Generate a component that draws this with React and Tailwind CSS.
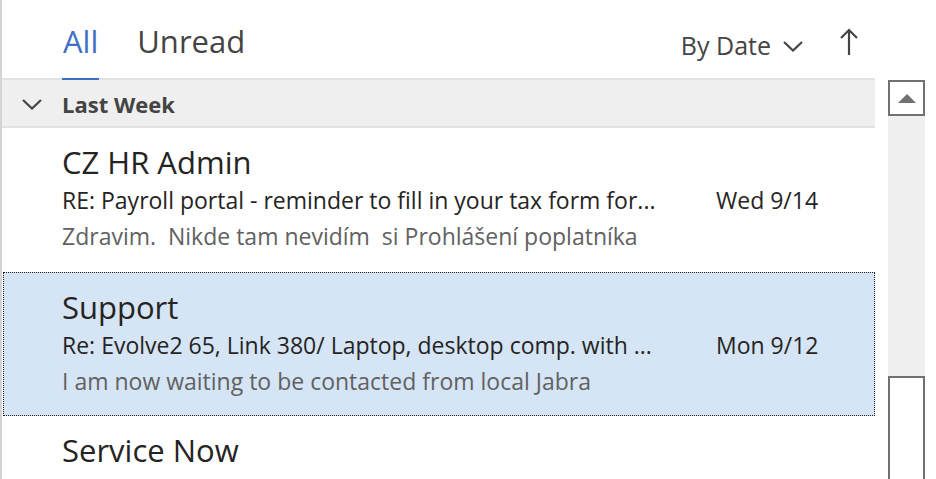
const mails = [
  {
    from: 'CZ HR Admin',
    subject: 'RE: Payroll portal - reminder to fill in your tax form for...',
    date: 'Wed 9/14',
    preview: 'Zdravim.\u00a0 Nikde tam nevidím\u00a0 si Prohlášení poplatníka',
  },
  {
    from: 'Support',
    subject: 'Re: Evolve2 65, Link 380/ Laptop, desktop comp. with ...',
    date: 'Mon 9/12',
    preview: 'I am now waiting to be contacted from local Jabra',
    selected: true,
  },
  { from: 'Service Now' },
];

function Chevron({ className }) {
  return (
    <svg className={className} width="20" height="11" viewBox="0 0 20 11" fill="none" stroke="currentColor" strokeWidth="2.2">
      <path d="M1 1l9 8.5L19 1" />
    </svg>
  );
}

function MailRow({ mail }) {
  return (
    <div
      className={
        mail.selected
          ? 'h-[144px] shrink-0 bg-[#d5e5f5] border border-dotted border-[#202020] ml-px pl-[58px] pt-[14px]'
          : 'h-[144px] shrink-0 pl-[60px] pt-[14px]'
      }
    >
      <div className="text-[31px] leading-[40px] text-[#252423]">{mail.from}</div>
      {mail.subject && (
        <div className="flex text-[23px] leading-[36px] text-[#252423]">
          <div className="w-[654px] whitespace-nowrap overflow-hidden">{mail.subject}</div>
          <div className="whitespace-nowrap">{mail.date}</div>
        </div>
      )}
      {mail.preview && (
        <div className="text-[23px] leading-[36px] text-[#616161] whitespace-nowrap">{mail.preview}</div>
      )}
    </div>
  );
}

export default function App() {
  return (
    <div className="w-[936px] h-[479px] flex bg-white overflow-hidden" style={{ fontFamily: '"Open Sans", "Noto Sans", sans-serif' }}>
      <div className="w-[2px] shrink-0 bg-[#d4d4d4]" />
      <div className="flex-1 flex flex-col min-w-0">
        {/* Header */}
        <div className="h-[80px] shrink-0 flex">
          <div className="w-[873px] flex items-end border-b-2 border-[#e3e3e3] pl-[60px] pr-[16px]">
            <div className="flex flex-col">
              <span className="text-[31px] leading-[40px] text-[#3f6fc5] px-px">All</span>
              <div className="h-[2px] bg-[#3f6fc5] mt-[17px] mb-[-2px]" />
            </div>
            <span className="text-[31px] leading-[40px] text-[#444] ml-[38px] mb-[17px]">Unread</span>
            <div className="ml-auto flex items-center mb-[15px] text-[#444]">
              <span className="text-[25px] leading-[36px]">By Date</span>
              <Chevron className="ml-[12px] mt-[3px]" />
              <svg className="ml-[36px] mb-[6px]" width="20" height="28" viewBox="0 0 20 28" fill="none" stroke="#444" strokeWidth="2.2">
                <path d="M10 27V2M2 10l8-8 8 8" />
              </svg>
            </div>
          </div>
        </div>

        <div className="flex-1 flex min-h-0">
          {/* List */}
          <div className="w-[873px] flex flex-col">
            <div className="h-[48px] shrink-0 bg-[#efefef] border-b-2 border-[#e1e1e1] flex items-center pt-[3px]">
              <Chevron className="ml-[20px] text-[#444]" />
              <span className="ml-[20px] text-[22px] font-bold text-[#444]">Last Week</span>
            </div>
            {mails.map((m) => (
              <MailRow key={m.from} mail={m} />
            ))}
          </div>

          {/* Scrollbar */}
          <div className="ml-[13px] w-[37px] shrink-0 bg-[#f0f0f0] flex flex-col">
            <div className="h-[36px] shrink-0 border-2 border-[#717171] bg-white flex items-center justify-center">
              <svg width="18" height="9" viewBox="0 0 18 9">
                <path d="M0 9L9 0l9 9z" fill="#717171" />
              </svg>
            </div>
            <div className="h-[260px] shrink-0" />
            <div className="flex-1 border-2 border-b-0 border-[#717171] bg-white" />
          </div>
        </div>
      </div>
    </div>
  );
}
